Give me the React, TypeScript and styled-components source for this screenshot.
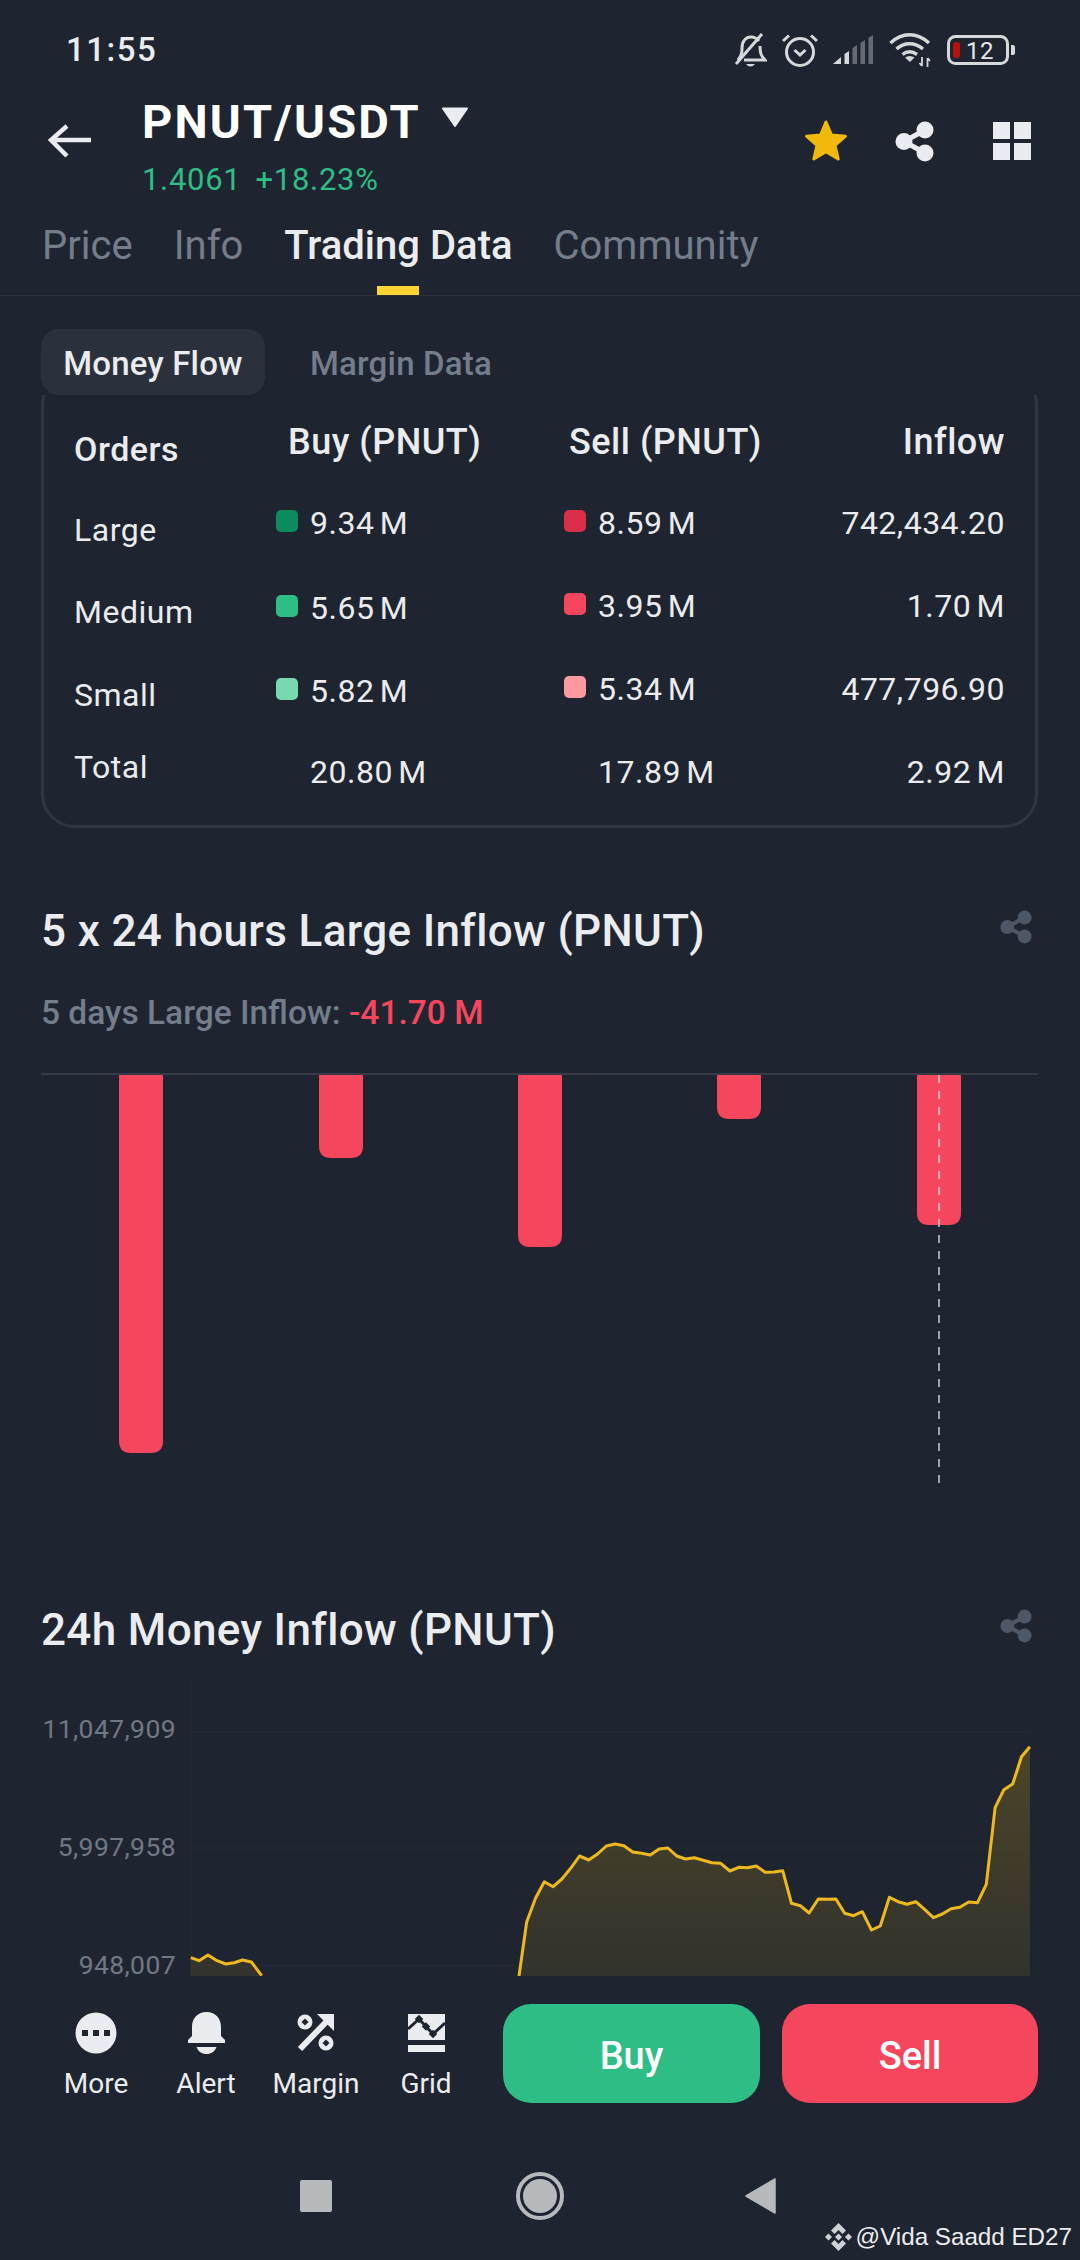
import React from "react";
import styled, { createGlobalStyle } from "styled-components";

const BG = "#1f2530";
const TEXT = "#eaecef";
const GREEN = "#2ebd85";
const RED = "#f6465d";
const YELLOW = "#f0b90b";
const FONT = `Roboto, "Noto Sans", "Liberation Sans", sans-serif`;

const Global = createGlobalStyle`
  html, body { margin: 0; padding: 0; background: ${BG}; }
  * { box-sizing: border-box; }
`;

const Page = styled.div`
  position: relative;
  width: 1080px;
  height: 2260px;
  overflow: hidden;
  background: ${BG};
  color: ${TEXT};
  font-family: ${FONT};
`;

const StatusBar = styled.div`
  height: 80px;
  padding: 20px 65px 0 66px;
  display: flex;
  align-items: center;
  justify-content: space-between;
`;
const Clock = styled.div`
  font-size: 33px;
  font-weight: 500;
  letter-spacing: 1.5px;
  line-height: 60px;
`;
const StatusIcons = styled.div`
  display: flex;
  align-items: center;
  gap: 15px;
`;

const Header = styled.div`
  height: 136px;
  padding: 14px 49px 0 48px;
  display: flex;
  align-items: flex-start;
`;
const BackIcon = styled.svg`
  width: 44px;
  height: 34px;
  margin-top: 30px;
  margin-right: 50px;
  flex: none;
`;
const TitleBlock = styled.div`
  flex: 1;
`;
const TitleRow = styled.div`
  display: flex;
  align-items: flex-start;
  gap: 20px;
`;
const Title = styled.div`
  font-size: 47px;
  font-weight: 700;
  line-height: 56px;
  letter-spacing: 2.2px;
  color: #fff;
`;
const Caret = styled.svg`
  width: 28px;
  height: 20px;
  margin-top: 13px;
`;
const PriceRow = styled.div`
  margin-top: 10px;
  display: flex;
  gap: 14px;
  font-size: 31px;
  line-height: 40px;
  letter-spacing: 0.7px;
  color: ${GREEN};
`;
const HeaderActions = styled.div`
  display: flex;
  align-items: center;
  margin-top: 26px;
  gap: 47px;
`;
const GridButton = styled.svg`
  display: block;
  margin-left: 12px;
`;

const Tabs = styled.div`
  height: 80px;
  padding-left: 42px;
  display: flex;
  gap: 41px;
  border-bottom: 1px solid #2b3139;
`;
const Tab = styled.div<{ $active?: boolean }>`
  position: relative;
  height: 79px;
  font-size: 40px;
  font-weight: ${(p) => (p.$active ? 500 : 400)};
  line-height: 60px;
  color: ${(p) => (p.$active ? TEXT : "#737d8c")};
  ${(p) =>
    p.$active
      ? `&::after {
    content: "";
    position: absolute;
    left: 50%;
    bottom: 0;
    width: 42px;
    height: 9px;
    margin-left: -21px;
    background: #fcd535;
  }`
      : ""}
`;

const SubTabs = styled.div`
  margin-top: 33px;
  padding-left: 41px;
  height: 66px;
  display: flex;
  align-items: center;
  gap: 45px;
`;
const SubTab = styled.div<{ $active?: boolean }>`
  height: 66px;
  width: ${(p) => (p.$active ? "224px" : "auto")};
  border-radius: 18px;
  background: ${(p) => (p.$active ? "#2a313c" : "transparent")};
  color: ${(p) => (p.$active ? TEXT : "#737d8c")};
  font-size: 33px;
  font-weight: 500;
  letter-spacing: 0.2px;
  line-height: 69px;
  text-align: center;
`;

const TableClip = styled.div`
  margin-left: 41px;
  width: 997px;
  height: 433px;
  overflow: hidden;
`;
const Table = styled.div`
  margin-top: -24px;
  height: 457px;
  padding: 24px 30px 0;
  border: 3px solid #30363f;
  border-radius: 34px;
  display: grid;
  grid-template-columns: 202px 288px 1fr auto;
`;
const Col = styled.div<{ $right?: boolean }>`
  display: flex;
  flex-direction: column;
  align-items: ${(p) => (p.$right ? "flex-end" : "flex-start")};
`;
const Cell = styled.div<{ $gap: number; $pad?: number }>`
  margin-top: ${(p) => p.$gap}px;
  padding-left: ${(p) => p.$pad ?? 0}px;
  height: 30px;
  line-height: 30px;
  display: flex;
  align-items: center;
  gap: 12px;
  white-space: nowrap;
  font-size: 32px;
  letter-spacing: 0.5px;
  word-spacing: -3px;
  color: ${TEXT};
`;
const HeadCell = styled.div<{ $gap: number; $pad?: number; $size: number }>`
  margin-top: ${(p) => p.$gap}px;
  padding-left: ${(p) => p.$pad ?? 0}px;
  height: 30px;
  line-height: 30px;
  white-space: nowrap;
  font-size: ${(p) => p.$size}px;
  font-weight: 500;
  letter-spacing: 0.5px;
  color: ${TEXT};
`;
const Swatch = styled.span<{ $color: string }>`
  width: 22px;
  height: 22px;
  border-radius: 5px;
  background: ${(p) => p.$color};
  flex: none;
  margin-top: -4px;
`;

const SectionHead = styled.div<{ $top: number }>`
  margin-top: ${(p) => p.$top}px;
  padding: 0 48px 0 41px;
  height: 60px;
  display: flex;
  align-items: center;
  justify-content: space-between;
`;
const Heading = styled.div`
  font-size: 44px;
  font-weight: 500;
  letter-spacing: 0.35px;
  line-height: 60px;
  color: ${TEXT};
`;
const ShareIcon = styled.svg`
  display: block;
  margin-top: -8px;
`;
const Sub = styled.div`
  margin-top: 30px;
  padding-left: 41px;
  font-size: 33.5px;
  font-weight: 500;
  line-height: 44px;
  color: #737d8c;
  span {
    color: ${RED};
  }
`;
const BarSvg = styled.svg`
  display: block;
  margin-top: 38px;
`;

const InflowChart = styled.div`
  margin-top: 20px;
  height: 296px;
  display: flex;
`;
const Axis = styled.div`
  width: 176px;
  margin-right: 14px;
  padding-top: 31px;
  display: flex;
  flex-direction: column;
  gap: 82px;
  text-align: right;
  font-size: 26.5px;
  line-height: 36px;
  letter-spacing: 0.4px;
  color: #6f7886;
`;
const AreaSvg = styled.svg`
  display: block;
`;

const Toolbar = styled.div`
  margin-top: 28px;
  padding-left: 41px;
  display: flex;
  align-items: flex-start;
`;
const Actions = styled.div`
  display: flex;
  margin-right: 22px;
`;
const Action = styled.div`
  width: 110px;
  padding-top: 8px;
  display: flex;
  flex-direction: column;
  align-items: center;
  gap: 12px;
  font-size: 28px;
  line-height: 36px;
  color: ${TEXT};
`;
const TradeButton = styled.div<{ $color: string; $w: number; $ml?: number }>`
  width: ${(p) => p.$w}px;
  margin-left: ${(p) => p.$ml ?? 0}px;
  height: 99px;
  border-radius: 28px;
  background: ${(p) => p.$color};
  color: #fff;
  font-size: 38px;
  font-weight: 500;
  line-height: 104px;
  text-align: center;
`;

const NavBar = styled.div`
  margin-top: 69px;
  padding-left: 300px;
  display: flex;
  align-items: center;
`;
const NavIcon = styled.svg<{ $ml?: number }>`
  display: block;
  margin-left: ${(p) => p.$ml ?? 0}px;
`;

const Watermark = styled.div`
  position: absolute;
  right: 8px;
  bottom: 8px;
  display: flex;
  align-items: center;
  gap: 4px;
  font-family: "Liberation Sans", Arial, sans-serif;
  font-size: 24.2px;
  line-height: 30px;
  color: #eceef1;
`;

/* ---------- chart data, read from the reference ---------- */
const mainLine: [number, number][] = (
  [
    [102, 768], [122, 606], [145, 535], [168, 485], [191, 500], [214, 477], [237, 445], [260, 408],
    [284, 420], [307, 402], [330, 378], [353, 372], [376, 377], [399, 396], [422, 400], [445, 405],
    [468, 387], [491, 384], [514, 408], [537, 417], [560, 413], [583, 421], [606, 428], [629, 430],
    [653, 453], [676, 442], [699, 443], [722, 438], [745, 457], [768, 456], [791, 452], [814, 550],
    [837, 557], [860, 579], [884, 537], [907, 538], [930, 537], [953, 580], [976, 587], [999, 575],
    [1023, 630], [1046, 618], [1070, 532], [1093, 545], [1116, 553], [1139, 545], [1162, 568],
    [1185, 593], [1208, 582], [1231, 566], [1254, 562], [1277, 546], [1300, 548], [1323, 493],
    [1346, 263], [1369, 209], [1392, 192], [1415, 110], [1437, 80],
  ] as [number, number][]
).map(([x, y]) => [480 + x / 2.6133 - 190, 40 + y / 3]);

const leftLine: [number, number][] = (
  [
    [277, 833], [289, 842], [302, 825], [315, 842], [328, 852], [340, 848], [352, 840], [365, 846], [380, 887],
  ] as [number, number][]
).map(([x, y]) => [x / 1.4518 - 190, y / 3]);

const toPts = (pts: [number, number][]) => pts.map(([x, y]) => `${x.toFixed(1)},${y.toFixed(1)}`).join(" ");
const toArea = (pts: [number, number][]) =>
  `${toPts(pts)} ${pts[pts.length - 1][0].toFixed(1)},296 ${pts[0][0].toFixed(1)},296`;

const bars = [
  { x: 78, bottom: 380 },
  { x: 278, bottom: 85 },
  { x: 477, bottom: 174 },
  { x: 676, bottom: 46 },
  { x: 876, bottom: 152 },
];

const barPath = (x: number, h: number) =>
  `M${x} 0 H${x + 44} V${h - 12} Q${x + 44} ${h} ${x + 32} ${h} H${x + 12} Q${x} ${h} ${x} ${h - 12} Z`;

/* ---------- icons ---------- */
const Share = ({ color, w, h }: { color: string; w: number; h: number }) => (
  <svg width={w} height={h} viewBox="0 0 39 41" fill={color} stroke={color} style={{ display: "block" }}>
    <circle cx="30" cy="9" r="8.5" stroke="none" />
    <circle cx="9" cy="20.5" r="8.5" stroke="none" />
    <circle cx="30" cy="32" r="8.5" stroke="none" />
    <path d="M30 9 L9 20.5 L30 32" fill="none" strokeWidth="5" />
  </svg>
);

const SmallShare = () => (
  <ShareIcon width="32" height="34" viewBox="0 0 39 41" fill="#4d5766" stroke="#4d5766">
    <circle cx="30" cy="9" r="8.5" stroke="none" />
    <circle cx="9" cy="20.5" r="8.5" stroke="none" />
    <circle cx="30" cy="32" r="8.5" stroke="none" />
    <path d="M30 9 L9 20.5 L30 32" fill="none" strokeWidth="5" />
  </ShareIcon>
);

const S = "#d7d8da";

const BellOff = () => (
  <svg width="33" height="34" viewBox="0 0 33 34" fill="none" stroke={S} strokeWidth="3" style={{ display: "block" }}>
    <path d="M4 27 C8 22 8 19 8 15 C8 8 12 4 17 4 C20 4 23 5.500 25 8" />
    <path d="M26 13 C26 20 27 23 31 27 H10" />
    <path d="M2 31 L28 1" />
    <path d="M12 31 H21 Q19 33.500 16.500 33.500 Q14 33.500 12 31 Z" fill={S} stroke="none" />
  </svg>
);
const Alarm = () => (
  <svg width="36" height="34" viewBox="0 0 36 34" fill="none" stroke={S} strokeWidth="3" style={{ display: "block" }}>
    <circle cx="18" cy="19" r="13.500" />
    <path d="M1 8 L7 2.500 M35 8 L29 2.500" />
    <path d="M12.500 17 L18 22 L23.500 17" />
  </svg>
);
const Signal = () => (
  <svg width="41" height="30" viewBox="0 0 41 30" style={{ display: "block" }}>
    <path d="M0 29 L8 22 V29 Z" fill={S} />
    <path d="M11.500 19 L16 16 V29 H11.500 Z" fill={S} />
    <path d="M19.500 13 L24 10 V29 H19.500 Z" fill="#666b73" />
    <path d="M27.500 8 L32 5 V29 H27.500 Z" fill="#666b73" />
    <path d="M35.500 3 L40 0 V29 H35.500 Z" fill="#666b73" />
  </svg>
);
const Wifi = () => (
  <svg width="43" height="36" viewBox="0 0 43 36" fill="none" stroke={S} strokeWidth="3.400" style={{ display: "block" }}>
    <path d="M1.500 11 C13 0 28 0 40 11" />
    <path d="M7.500 17 C15 10 26 10 34 17" />
    <path d="M13.500 22.500 C18 19 23 19 28 22.500" />
    <path d="M16 25.500 L21 30 L25.500 25.500 C22.500 23.500 19 23.500 16 25.500 Z" fill={S} stroke="none" />
    <path d="M33 25 V34 M30.500 31 L33 34 M38.500 26 V35 M38.500 26 L41 29" strokeWidth="1.800" />
  </svg>
);
const Battery = () => (
  <svg width="68" height="30" viewBox="0 0 68 30" style={{ display: "block" }}>
    <rect x="1.500" y="1.500" width="59" height="27" rx="7" fill="none" stroke={S} strokeWidth="3" />
    <rect x="6" y="7" width="7" height="16" rx="3" fill="#b80f0f" />
    <path d="M64 10 H66 Q68 10 68 12 V18 Q68 20 66 20 H64 Z" fill={S} />
    <text x="19" y="24" fontFamily={FONT} fontSize="24" fill="#e8e8ea" letterSpacing="0.4">
      12
    </text>
  </svg>
);

const BellSolid = () => (
  <svg width="37" height="42" viewBox="0 0 37 42" fill={TEXT} style={{ display: "block" }}>
    <path d="M18.500 0 C9 0 4 7 4 15 V24 L0 28 V31 H37 V28 L33 24 V15 C33 7 28 0 18.500 0 Z" />
    <path d="M8.500 35 H28.500 C27 39.500 23 42 18.500 42 C14 42 10 39.500 8.500 35 Z" />
  </svg>
);
const MoreSolid = () => (
  <svg width="42" height="42" viewBox="0 0 42 42" style={{ display: "block" }}>
    <circle cx="21" cy="21" r="20.500" fill={TEXT} />
    <rect x="7" y="18" width="6" height="6" fill={BG} />
    <rect x="18" y="18" width="6" height="6" fill={BG} />
    <rect x="29" y="18" width="6" height="6" fill={BG} />
  </svg>
);
const MarginSolid = () => (
  <svg width="38" height="38" viewBox="0 0 38 38" style={{ display: "block", margin: "2px 0" }}>
    <path d="M20 0 H37 V17 Z" fill={TEXT} />
    <path d="M3 35 L32 5" fill="none" stroke={TEXT} strokeWidth="6" />
    <circle cx="8" cy="8" r="7.500" fill={TEXT} />
    <rect x="5.500" y="5.500" width="5" height="5" transform="rotate(45 8 8)" fill={BG} />
    <circle cx="29" cy="29" r="7.500" fill={TEXT} />
    <rect x="26.500" y="26.500" width="5" height="5" transform="rotate(45 29 29)" fill={BG} />
  </svg>
);
const GridSolid = () => (
  <svg width="37" height="38" viewBox="0 0 37 38" style={{ display: "block", margin: "2px 0" }}>
    <rect x="0" y="0" width="37" height="26" fill={TEXT} />
    <rect x="0" y="31" width="37" height="7" fill={TEXT} />
    <path d="M0 15 L11 5 L25 20 L37 9" fill="none" stroke={BG} strokeWidth="3" />
    <rect x="8" y="2" width="6" height="6" transform="rotate(45 11 5)" fill={BG} />
    <rect x="15" y="9.500" width="6" height="6" transform="rotate(45 18 12.500)" fill={BG} />
    <rect x="22" y="17" width="6" height="6" transform="rotate(45 25 20)" fill={BG} />
  </svg>
);

const BinanceMark = () => (
  <svg width="27" height="28" viewBox="0 0 27 28" fill="#cfd1d4" style={{ display: "block" }}>
    <path d="M13.500 0 L21 7.500 L17.500 11 L13.500 7 L9.500 11 L6 7.500 Z" />
    <path d="M13.500 28 L21 20.500 L17.500 17 L13.500 21 L9.500 17 L6 20.500 Z" />
    <path d="M3.500 10.500 L7 14 L3.500 17.500 L0 14 Z" />
    <path d="M23.500 10.500 L27 14 L23.500 17.500 L20 14 Z" />
    <path d="M13.500 10.500 L17 14 L13.500 17.500 L10 14 Z" />
  </svg>
);

const rows = {
  buy: [
    { color: "#0e8a5f", value: "9.34 M", gap: 51 },
    { color: "#2ebd85", value: "5.65 M", gap: 55 },
    { color: "#78d9b0", value: "5.82 M", gap: 53 },
  ],
  sell: [
    { color: "#d92d4a", value: "8.59 M", gap: 51 },
    { color: "#f6465d", value: "3.95 M", gap: 53 },
    { color: "#ff9aa2", value: "5.34 M", gap: 53 },
  ],
};

export default function App() {
  return (
    <Page>
      <Global />
      <StatusBar>
        <Clock>11:55</Clock>
        <StatusIcons>
          <BellOff />
          <Alarm />
          <Signal />
          <Wifi />
          <Battery />
        </StatusIcons>
      </StatusBar>

      <Header>
        <BackIcon viewBox="0 0 44 34" fill="none" stroke={TEXT} strokeWidth="4.500">
          <path d="M43 16 H4 M19 2 L3 16 L19 32" />
        </BackIcon>
        <TitleBlock>
          <TitleRow>
            <Title>PNUT/USDT</Title>
            <Caret viewBox="0 0 28 20">
              <path d="M2 1.500 H26 L14 19 Z" fill={TEXT} stroke={TEXT} strokeWidth="2" strokeLinejoin="round" />
            </Caret>
          </TitleRow>
          <PriceRow>
            <span>1.4061</span>
            <span>+18.23%</span>
          </PriceRow>
        </TitleBlock>
        <HeaderActions>
          <svg width="44" height="42" viewBox="0 0 44 42" style={{ display: "block" }}>
            <path
              d="M22 2 L27.500 15 L41.500 16.200 L31 25.400 L34.200 39 L22 31.800 L9.800 39 L13 25.400 L2.500 16.200 L16.500 15 Z"
              fill={YELLOW}
              stroke={YELLOW}
              strokeWidth="3"
              strokeLinejoin="round"
            />
          </svg>
          <Share color={TEXT} w={39} h={41} />
          <GridButton width="38" height="38" viewBox="0 0 38 38" fill={TEXT}>
            <rect width="17" height="17" />
            <rect x="21" width="17" height="17" />
            <rect y="21" width="17" height="17" />
            <rect x="21" y="21" width="17" height="17" />
          </GridButton>
        </HeaderActions>
      </Header>

      <Tabs>
        <Tab>Price</Tab>
        <Tab>Info</Tab>
        <Tab $active>Trading Data</Tab>
        <Tab>Community</Tab>
      </Tabs>

      <SubTabs>
        <SubTab $active>Money Flow</SubTab>
        <SubTab>Margin Data</SubTab>
      </SubTabs>

      <TableClip>
        <Table>
          <Col>
            <HeadCell $gap={36} $size={34}>Orders</HeadCell>
            <Cell $gap={51}>Large</Cell>
            <Cell $gap={52}>Medium</Cell>
            <Cell $gap={53}>Small</Cell>
            <Cell $gap={42}>Total</Cell>
          </Col>
          <Col>
            <HeadCell $gap={29} $pad={12} $size={36}>Buy (PNUT)</HeadCell>
            {rows.buy.map((r) => (
              <Cell key={r.value} $gap={r.gap}>
                <Swatch $color={r.color} />
                {r.value}
              </Cell>
            ))}
            <Cell $gap={51} $pad={34}>20.80 M</Cell>
          </Col>
          <Col>
            <HeadCell $gap={29} $pad={5} $size={36}>Sell (PNUT)</HeadCell>
            {rows.sell.map((r) => (
              <Cell key={r.value} $gap={r.gap}>
                <Swatch $color={r.color} />
                {r.value}
              </Cell>
            ))}
            <Cell $gap={53} $pad={34}>17.89 M</Cell>
          </Col>
          <Col $right>
            <HeadCell $gap={29} $size={36}>Inflow</HeadCell>
            <Cell $gap={51}>742,434.20</Cell>
            <Cell $gap={53}>1.70 M</Cell>
            <Cell $gap={53}>477,796.90</Cell>
            <Cell $gap={53}>2.92 M</Cell>
          </Col>
        </Table>
      </TableClip>

      <SectionHead $top={73}>
        <Heading>5 x 24 hours Large Inflow (PNUT)</Heading>
        <SmallShare />
      </SectionHead>
      <Sub>
        5 days Large Inflow: <span>-41.70 M</span>
      </Sub>

      <BarSvg width="1080" height="526" viewBox="0 0 1080 526">
        {bars.map((b) => (
          <path key={b.x} d={barPath(b.x + 41, b.bottom)} fill={RED} />
        ))}
        <rect x="41" y="0" width="997" height="2" fill="#353b45" />
        <path d="M939 2 V414" stroke="#c9ccd1" strokeWidth="1.500" strokeDasharray="8 8" fill="none" />
      </BarSvg>

      <SectionHead $top={1}>
        <Heading>24h Money Inflow (PNUT)</Heading>
        <SmallShare />
      </SectionHead>

      <InflowChart>
        <Axis>
          <div>11,047,909</div>
          <div>5,997,958</div>
          <div>948,007</div>
        </Axis>
        <AreaSvg width="845" height="296" viewBox="0 0 845 296">
          <defs>
            <linearGradient id="area" gradientUnits="userSpaceOnUse" x1="0" y1="20" x2="0" y2="296">
              <stop offset="0" stopColor={YELLOW} stopOpacity="0.24" />
              <stop offset="1" stopColor={YELLOW} stopOpacity="0.09" />
            </linearGradient>
          </defs>
          <path d="M1 0 V296" stroke="#262c37" strokeWidth="1" />
          <path d="M1 52 H840 M1 168 H840 M1 286 H840" stroke="#252b36" strokeWidth="1" />
          <polygon points={toArea(mainLine)} fill="url(#area)" />
          <polygon points={toArea(leftLine)} fill="url(#area)" />
          <polyline points={toPts(mainLine)} fill="none" stroke="#eeb91e" strokeWidth="3" strokeLinejoin="round" />
          <polyline points={toPts(leftLine)} fill="none" stroke="#eeb91e" strokeWidth="3" strokeLinejoin="round" />
        </AreaSvg>
      </InflowChart>

      <Toolbar>
        <Actions>
          <Action>
            <MoreSolid />
            More
          </Action>
          <Action>
            <BellSolid />
            Alert
          </Action>
          <Action>
            <MarginSolid />
            Margin
          </Action>
          <Action>
            <GridSolid />
            Grid
          </Action>
        </Actions>
        <TradeButton $color={GREEN} $w={257}>Buy</TradeButton>
        <TradeButton $color={RED} $w={256} $ml={22}>Sell</TradeButton>
      </Toolbar>

      <NavBar>
        <NavIcon width="32" height="32" viewBox="0 0 32 32">
          <rect width="32" height="32" rx="2" fill="#b7b9bd" />
        </NavIcon>
        <NavIcon $ml={184} width="48" height="48" viewBox="0 0 48 48">
          <circle cx="24" cy="24" r="22" fill="none" stroke="#b7b9bd" strokeWidth="4" />
          <circle cx="24" cy="24" r="17" fill="#b7b9bd" />
        </NavIcon>
        <NavIcon $ml={181} width="31" height="36" viewBox="0 0 31 36">
          <path d="M30 1 V35 L1 18 Z" fill="#b7b9bd" stroke="#b7b9bd" strokeWidth="1.500" strokeLinejoin="round" />
        </NavIcon>
      </NavBar>

      <Watermark>
        <BinanceMark />
        @Vida Saadd ED27
      </Watermark>
    </Page>
  );
}
